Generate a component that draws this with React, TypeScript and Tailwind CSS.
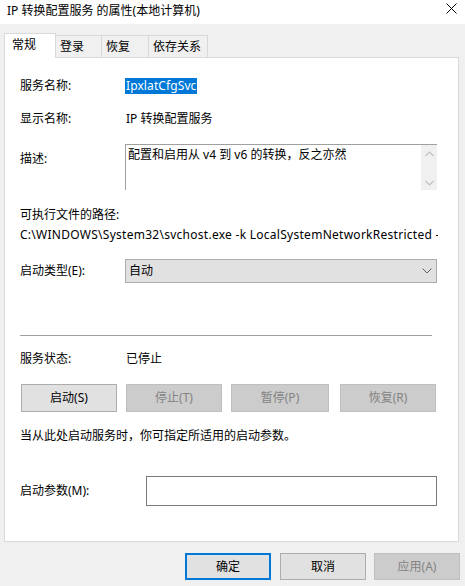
const font = {
  fontFamily: '"Noto Sans", "Noto Sans CJK SC", sans-serif',
};

function Tab({ label, active, w }: { label: string; active?: boolean; w: string }) {
  if (active) {
    return (
      <div
        className={`${w} h-[25px] bg-white border-t border-l border-r border-[#d9d9d9] relative z-10 pl-[7px] pt-[3px] text-[12px] leading-[16px]`}
      >
        {label}
      </div>
    );
  }
  return (
    <div
      className={`${w} h-[23px] mt-[2px] bg-[#f0f0f0] border-t border-r border-[#d9d9d9] pl-[4px] pt-[3px] text-[12px] leading-[16px]`}
    >
      {label}
    </div>
  );
}

function Btn({ label, disabled, w = "w-[96px]" }: { label: string; disabled?: boolean; w?: string }) {
  return (
    <div
      className={`${w} h-[28px] flex items-center justify-center border text-[12px] ${
        disabled
          ? "bg-[#cccccc] border-[#bfbfbf] text-[#838383]"
          : "bg-[#e1e1e1] border-[#adadad] text-black"
      }`}
    >
      {label}
    </div>
  );
}

export default function App() {
  return (
    <div
      className="w-[465px] h-[586px] bg-[#f0f0f0] flex flex-col overflow-hidden text-black"
      style={font}
    >
      {/* Title bar */}
      <div className="h-[24px] bg-white flex items-center justify-between pl-[7px] pr-[8px]">
        <span className="text-[12px] leading-[16px] -mt-[3px]">IP 转换配置服务 的属性(本地计算机)</span>
        <svg width="11" height="11" viewBox="0 0 11 11" className="-mt-[7px]">
          <path d="M0.5 0.5L10.5 10.5M10.5 0.5L0.5 10.5" stroke="#000" strokeWidth="1" />
        </svg>
      </div>

      {/* Tabs */}
      <div className="flex pl-[4px] pt-[9px]">
        <Tab label="常规" active w="w-[52px]" />
        <Tab label="登录" w="w-[46px]" />
        <Tab label="恢复" w="w-[47px]" />
        <Tab label="依存关系" w="w-[59px]" />
      </div>

      {/* Panel */}
      <div className="ml-[4px] w-[455px] h-[485px] -mt-px bg-white border border-[#d9d9d9] pl-[15px] text-[12px] leading-[16px] flex flex-col">
        <div className="flex mt-[20px] h-[16px]">
          <span className="w-[106px]">服务名称:</span>
          <span className="bg-[#0078d7] text-white px-[1px] -ml-[1px] tracking-[0.1px]">IpxlatCfgSvc</span>
        </div>
        <div className="flex mt-[17px] h-[16px]">
          <span className="w-[106px]">显示名称:</span>
          <span>IP 转换配置服务</span>
        </div>
        <div className="flex mt-[17px] items-start">
          <span className="w-[105px] mt-[7px]">描述:</span>
          <div className="w-[312px] h-[46px] border-t border-l border-[#a0a0a0] flex">
            <div className="flex-1 pl-[2px] pt-[2px]">配置和启用从 v4 到 v6 的转换，反之亦然</div>
            <div className="w-[16px] bg-[#f0f0f0] flex flex-col items-center justify-between pt-[6px] pb-[4px]">
              <svg width="9" height="6" viewBox="0 0 9 6">
                <path d="M0.5 5L4.5 1L8.5 5" stroke="#c2c2c2" strokeWidth="1.2" fill="none" />
              </svg>
              <svg width="9" height="6" viewBox="0 0 9 6">
                <path d="M0.5 1L4.5 5L8.5 1" stroke="#c2c2c2" strokeWidth="1.2" fill="none" />
              </svg>
            </div>
          </div>
        </div>
        <div className="mt-[17px] h-[16px]">可执行文件的路径:</div>
        <div className="mt-[4px] h-[16px] w-[418px] overflow-hidden whitespace-nowrap tracking-[0.27px]">
          C:\WINDOWS\System32\svchost.exe -k LocalSystemNetworkRestricted -p
        </div>
        <div className="flex mt-[16px] items-center">
          <span className="w-[105px]">启动类型(E):</span>
          <div className="w-[312px] h-[24px] bg-[#e1e1e1] border border-[#adadad] flex items-center justify-between pl-[3px] pr-[4px]">
            <span>自动</span>
            <svg width="10" height="6" viewBox="0 0 10 6">
              <path d="M0.5 0.5L5 5L9.5 0.5" stroke="#606060" strokeWidth="1" fill="none" />
            </svg>
          </div>
        </div>
        <div className="mt-[52px] h-px w-[412px] bg-[#a0a0a0]" />
        <div className="flex mt-[15px] h-[16px]">
          <span className="w-[106px]">服务状态:</span>
          <span>已停止</span>
        </div>
        <div className="flex mt-[17px] gap-[9px] ml-px">
          <Btn label="启动(S)" />
          <Btn label="停止(T)" disabled />
          <Btn label="暂停(P)" disabled w="w-[98px]" />
          <div className="ml-[2px]">
            <Btn label="恢复(R)" disabled w="w-[96px]" />
          </div>
        </div>
        <div className="mt-[16px] h-[16px]">当从此处启动服务时，你可指定所适用的启动参数。</div>
        <div className="flex mt-[32px] items-center">
          <span className="w-[126px]">启动参数(M):</span>
          <div className="w-[291px] h-[30px] bg-white border border-[#7a7a7a]" />
        </div>
      </div>

      {/* Bottom buttons */}
      <div className="flex mt-[11px] pl-[185px] gap-[9px] text-[12px]">
        <div className="w-[86px] h-[27px] bg-[#e1e1e1] border-2 border-[#0078d7] flex items-center justify-center">
          确定
        </div>
        <div className="w-[86px] h-[27px] bg-[#e1e1e1] border border-[#adadad] flex items-center justify-center">
          取消
        </div>
        <div className="w-[86px] h-[27px] bg-[#cccccc] border border-[#bfbfbf] text-[#838383] flex items-center justify-center -ml-px">
          应用(A)
        </div>
      </div>
    </div>
  );
}
